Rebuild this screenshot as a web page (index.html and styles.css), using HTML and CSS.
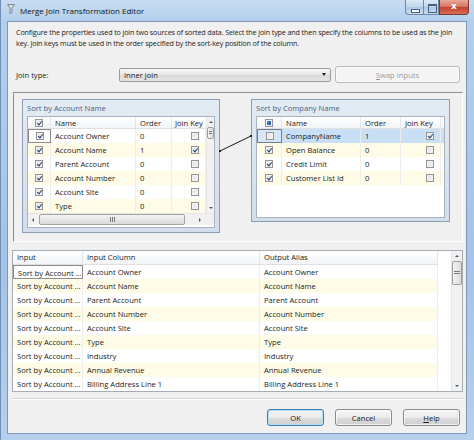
FILE: index.html
```html
<!DOCTYPE html>
<html>
<head>
    <title>Merge Join Transformation Editor</title>
    <meta name="viewport" content="width=device-width, initial-scale=1.0">
    <link rel="stylesheet" href="styles.css">
</head>
<body>
<div class="window">
    <div class="titlebar">
        <svg class="app-icon" width="8" height="10" viewBox="0 0 8 10">
            <path d="M0.5 0.5 H7.5 L5 4 V8.5 L3 9.5 V4 Z" fill="#d9dde2" stroke="#7d8791" stroke-width="1"/>
        </svg>
        <span class="title">Merge Join Transformation Editor</span>
        <div class="caption">
            <span class="cap cap-min"></span>
            <span class="cap cap-max"></span>
            <span class="cap cap-close">x</span>
        </div>
    </div>

    <div class="client">
        <p class="desc">Configure the properties used to join two sources of sorted data. Select the join type and then specify the columns to be used as the join<br>key. Join keys must be used in the order specified by the sort-key position of the column.</p>

        <div class="join-row">
            <label class="join-label"><u>J</u>oin type:</label>
            <div class="combo">
                <span>Inner join</span>
                <span class="combo-arrow"></span>
            </div>
            <button class="btn btn-disabled swap"><u>S</u>wap Inputs</button>
        </div>

        <!-- surface with the two sorted inputs -->
        <div class="designer">
            <div class="src src-left">
                <div class="src-title">Sort by Account Name</div>
                <div class="src-grid">
                    <div class="src-main">
                        <div class="src-table">
                            <div class="row head">
                                <div class="cell chk"><span class="cb on"></span></div>
                                <div class="cell">Name</div>
                                <div class="cell">Order</div>
                                <div class="cell">Join Key</div>
                            </div>
                            <div class="row">
                                <div class="cell chk focus"><span class="cb on"></span></div>
                                <div class="cell">Account Owner</div>
                                <div class="cell">0</div>
                                <div class="cell chk key"><span class="cb"></span></div>
                            </div>
                            <div class="row alt">
                                <div class="cell chk"><span class="cb on"></span></div>
                                <div class="cell">Account Name</div>
                                <div class="cell">1</div>
                                <div class="cell chk key"><span class="cb on"></span></div>
                            </div>
                            <div class="row">
                                <div class="cell chk"><span class="cb on"></span></div>
                                <div class="cell">Parent Account</div>
                                <div class="cell">0</div>
                                <div class="cell chk key"><span class="cb"></span></div>
                            </div>
                            <div class="row alt">
                                <div class="cell chk"><span class="cb on"></span></div>
                                <div class="cell">Account Number</div>
                                <div class="cell">0</div>
                                <div class="cell chk key"><span class="cb"></span></div>
                            </div>
                            <div class="row">
                                <div class="cell chk"><span class="cb on"></span></div>
                                <div class="cell">Account Site</div>
                                <div class="cell">0</div>
                                <div class="cell chk key"><span class="cb"></span></div>
                            </div>
                            <div class="row alt">
                                <div class="cell chk"><span class="cb on"></span></div>
                                <div class="cell">Type</div>
                                <div class="cell">0</div>
                                <div class="cell chk key"><span class="cb"></span></div>
                            </div>
                        </div>
                        <div class="vscroll">
                            <span class="arr up"></span>
                            <span class="thumb"></span>
                            <span class="track"></span>
                            <span class="arr down"></span>
                        </div>
                    </div>
                    <div class="hscroll">
                        <span class="arr left"></span>
                        <span class="hthumb"></span>
                        <span class="htrack"></span>
                        <span class="arr right"></span>
                        <span class="corner"></span>
                    </div>
                </div>
            </div>

            <div class="src src-right">
                <div class="src-title">Sort by Company Name</div>
                <div class="src-grid">
                    <div class="src-table">
                        <div class="row head">
                            <div class="cell chk"><span class="cb mixed"></span></div>
                            <div class="cell">Name</div>
                            <div class="cell">Order</div>
                            <div class="cell">Join Key</div>
                        </div>
                        <div class="row sel">
                            <div class="cell chk focus"><span class="cb"></span></div>
                            <div class="cell">CompanyName</div>
                            <div class="cell">1</div>
                            <div class="cell chk key"><span class="cb on"></span></div>
                        </div>
                        <div class="row alt">
                            <div class="cell chk"><span class="cb on"></span></div>
                            <div class="cell">Open Balance</div>
                            <div class="cell">0</div>
                            <div class="cell chk key"><span class="cb"></span></div>
                        </div>
                        <div class="row">
                            <div class="cell chk"><span class="cb on"></span></div>
                            <div class="cell">Credit Limit</div>
                            <div class="cell">0</div>
                            <div class="cell chk key"><span class="cb"></span></div>
                        </div>
                        <div class="row alt">
                            <div class="cell chk"><span class="cb on"></span></div>
                            <div class="cell">Customer List Id</div>
                            <div class="cell">0</div>
                            <div class="cell chk key"><span class="cb"></span></div>
                        </div>
                    </div>
                </div>
            </div>

            <svg class="connector" width="449" height="148" viewBox="0 0 449 148">
                <line x1="206" y1="58" x2="237" y2="43" stroke="#1a1a1a" stroke-width="1"/>
                <rect x="205" y="57" width="2" height="2" fill="#1a1a1a"/>
                <rect x="236" y="42" width="2" height="2" fill="#1a1a1a"/>
            </svg>
        </div>

        <!-- output columns -->
        <div class="output">
            <div class="out-table">
                <div class="orow head">
                    <div class="cell">Input</div>
                    <div class="cell">Input Column</div>
                    <div class="cell">Output Alias</div>
                </div>
                <div class="orow">
                    <div class="cell focus">Sort by Account ...</div>
                    <div class="cell">Account Owner</div>
                    <div class="cell">Account Owner</div>
                </div>
                <div class="orow alt">
                    <div class="cell">Sort by Account ...</div>
                    <div class="cell">Account Name</div>
                    <div class="cell">Account Name</div>
                </div>
                <div class="orow">
                    <div class="cell">Sort by Account ...</div>
                    <div class="cell">Parent Account</div>
                    <div class="cell">Parent Account</div>
                </div>
                <div class="orow alt">
                    <div class="cell">Sort by Account ...</div>
                    <div class="cell">Account Number</div>
                    <div class="cell">Account Number</div>
                </div>
                <div class="orow">
                    <div class="cell">Sort by Account ...</div>
                    <div class="cell">Account Site</div>
                    <div class="cell">Account Site</div>
                </div>
                <div class="orow alt">
                    <div class="cell">Sort by Account ...</div>
                    <div class="cell">Type</div>
                    <div class="cell">Type</div>
                </div>
                <div class="orow">
                    <div class="cell">Sort by Account ...</div>
                    <div class="cell">Industry</div>
                    <div class="cell">Industry</div>
                </div>
                <div class="orow alt">
                    <div class="cell">Sort by Account ...</div>
                    <div class="cell">Annual Revenue</div>
                    <div class="cell">Annual Revenue</div>
                </div>
                <div class="orow">
                    <div class="cell">Sort by Account ...</div>
                    <div class="cell">Billing Address Line 1</div>
                    <div class="cell">Billing Address Line 1</div>
                </div>
            </div>
            <div class="vscroll out-scroll">
                <span class="arr up"></span>
                <span class="thumb"></span>
                <span class="track"></span>
                <span class="arr down"></span>
            </div>
        </div>

        <div class="sep"></div>

        <div class="buttons">
            <button class="btn btn-default">OK</button>
            <button class="btn">Cancel</button>
            <button class="btn"><u>H</u>elp</button>
        </div>
    </div>
</div>
</body>
</html>
```

FILE: styles.css
```css
* {
    box-sizing: border-box;
}

html, body {
    margin: 0;
    padding: 0;
}

body {
    width: 474px;
    height: 440px;
    overflow: hidden;
    font-family: "Open Sans", "Noto Sans", sans-serif;
    font-size: 7.6px;
    color: #1b1b1b;
    background: #a8c6e8;
}

u {
    text-decoration: underline;
}

/* window frame */
.window {
    width: 474px;
    height: 440px;
    display: flex;
    flex-direction: column;
    padding: 0 7px 6px 6px;
    background: linear-gradient(to bottom, #c9ddf2 0, #b3cfec 21px, #a4c3e6 60%, #b6d0ec 100%);
    border-left: 1px solid #6f8fb4;
}

.titlebar {
    height: 21px;
    margin: 0 -7px 0 -6px;
    padding: 0 5px 0 6px;
    display: flex;
    align-items: flex-start;
}

.app-icon {
    margin-top: 4px;
}

.title {
    margin-left: 5px;
    margin-top: 5px;
    font-size: 8px;
    color: #111;
}

.caption {
    margin-left: auto;
    display: flex;
}

.cap {
    height: 15px;
    border: 1px solid #6f88a8;
    border-top: none;
    background: linear-gradient(to bottom, #dce9f6, #c2d6ec 50%, #adc7e5 51%, #c6dbf0);
}

.cap-min {
    width: 18px;
    border-radius: 0 0 0 4px;
    border-right: none;
    position: relative;
}

.cap-min::after {
    content: "";
    position: absolute;
    left: 5px;
    top: 9px;
    width: 7px;
    height: 2px;
    background: #fff;
    border: 1px solid #4a5f7c;
}

.cap-max {
    width: 16px;
    position: relative;
}

.cap-max::after {
    content: "";
    position: absolute;
    left: 4px;
    top: 4px;
    width: 7px;
    height: 6px;
    border: 1px solid #4a5f7c;
    border-top-width: 2px;
}

.cap-close {
    width: 30px;
    border-radius: 0 0 4px 0;
    border-color: #7c3a36;
    background: linear-gradient(to bottom, #e8a99c, #d4715e 50%, #c2412c 51%, #d86d55);
    color: #fff;
    font-family: "DejaVu Sans", sans-serif;
    font-weight: bold;
    font-size: 9px;
    text-align: center;
    line-height: 13px;
}

/* dialog client area */
.client {
    flex: 1;
    background: #f0f0f0;
    border: 1px solid #7e97b6;
    display: flex;
    flex-direction: column;
}

.desc {
    margin: 0;
    padding: 5px 8px 0 8px;
    font-size: 7.2px;
    letter-spacing: -0.14px;
    line-height: 10.5px;
    white-space: nowrap;
}

.join-row {
    margin-top: 18px;
    padding-left: 8px;
    display: flex;
    align-items: center;
}

.join-label {
    width: 103px;
}

.combo {
    width: 212px;
    height: 14px;
    border: 1px solid #9a9a9a;
    border-radius: 2px;
    background: linear-gradient(to bottom, #f7f7f7, #e6e6e6 50%, #dadada 51%, #e4e4e4);
    display: flex;
    align-items: center;
    padding: 0 4px;
}

.combo-arrow {
    margin-left: auto;
    width: 0;
    height: 0;
    border-left: 2.5px solid transparent;
    border-right: 2.5px solid transparent;
    border-top: 3px solid #222;
}

.btn {
    height: 17px;
    padding: 0;
    font-family: inherit;
    font-size: inherit;
    color: #1b1b1b;
    border: 1px solid #8a8a8a;
    border-radius: 3px;
    background: linear-gradient(to bottom, #f4f4f4, #ebebeb 50%, #dcdcdc 51%, #d0d0d0);
    box-shadow: inset 0 0 0 1px rgba(255, 255, 255, 0.7);
}

.swap {
    width: 125px;
    margin-left: 4px;
}

.btn-disabled {
    color: #9a9a9a;
    border-color: #b9b9b9;
    background: #f4f4f4;
}

/* designer surface */
.designer {
    position: relative;
    height: 150px;
    margin: 9px 3px 0 5px;
    border: 1px solid #8f8f8f;
    border-right-color: #fff;
    border-bottom-color: #fff;
    padding: 6px 0 0 8px;
    display: flex;
    align-items: flex-start;
    gap: 31px;
}

.connector {
    position: absolute;
    left: 0;
    top: 0;
    pointer-events: none;
}

.src {
    border: 1px solid #8d9db2;
    background: linear-gradient(to bottom, #e3ebf4, #d2deec);
    padding: 0 4px 4px 4px;
}

.src-left {
    width: 198px;
    height: 134px;
}

.src-right {
    width: 199px;
    height: 123px;
}

.src-title {
    height: 16px;
    line-height: 17px;
    color: #4b6180;
}

.src-grid {
    background: #fff;
    border: 1px solid #a9b3bf;
}

.src-left .src-grid {
    height: 112px;
}

.src-right .src-grid {
    height: 102px;
}

.src-main {
    display: flex;
}

.src-table {
    flex: 1;
}

.row {
    display: grid;
    height: 14px;
    line-height: 14px;
}

.src-left .row {
    grid-template-columns: 23px 85px 36px 34px;
}

.src-right .row {
    grid-template-columns: 25px 79px 40px 40px;
}

.row .cell,
.orow .cell {
    padding-left: 4px;
    border-right: 1px solid #ededed;
    white-space: nowrap;
    overflow: hidden;
}

.row.head {
    height: 12px;
    line-height: 12px;
    background: linear-gradient(to bottom, #ffffff, #f2f4f7);
    border-bottom: 1px solid #e0e0e0;
}

.row.head .cell {
    border-right-color: #e3e6ea;
}

.src-left .row.head .cell:last-child {
    padding-left: 3px;
    border-right: none;
}

.alt {
    background: #fefce6;
}

.row.sel {
    background: #c8dff6;
}

.cell.chk {
    padding-left: 0;
    display: flex;
    align-items: center;
    justify-content: center;
}

.cell.key {
    justify-content: flex-end;
    padding-right: 6px;
}

.cell.focus {
    background: #fff;
    border: 1px solid #8c8c8c;
}

.sel .cell.focus {
    background: #d6e7f8;
    border-color: #6f7f93;
}

/* checkboxes */
.cb {
    position: relative;
    width: 8px;
    height: 8px;
    border: 1px solid #949494;
    background: linear-gradient(135deg, #dedede, #f8f8f8);
    box-shadow: inset 0 0 0 1px #f2f2f2;
}

.cb.on::after {
    content: "";
    position: absolute;
    left: 2px;
    top: 0;
    width: 2px;
    height: 4px;
    border-right: 1px solid #233e6b;
    border-bottom: 1px solid #233e6b;
    transform: rotate(40deg);
}

.cb.mixed {
    background: #fff;
}

.cb.mixed::after {
    content: "";
    position: absolute;
    left: 1px;
    top: 1px;
    width: 4px;
    height: 4px;
    background: linear-gradient(135deg, #3f88c9, #1f5c99);
}

/* scrollbars */
.vscroll {
    width: 8px;
    display: flex;
    flex-direction: column;
    background: #f1f1f1;
    border-left: 1px solid #e6e6e6;
}

.arr {
    position: relative;
    height: 10px;
    flex: none;
}

.arr::after {
    content: "";
    position: absolute;
    width: 0;
    height: 0;
}

.arr.up::after {
    left: 2px;
    top: 4px;
    border-left: 2px solid transparent;
    border-right: 2px solid transparent;
    border-bottom: 2px solid #555;
}

.arr.down::after {
    left: 2px;
    top: 4px;
    border-left: 2px solid transparent;
    border-right: 2px solid transparent;
    border-top: 2px solid #555;
}

.arr.left::after {
    left: 4px;
    top: 4px;
    border-top: 2px solid transparent;
    border-bottom: 2px solid transparent;
    border-right: 2px solid #555;
}

.arr.right::after {
    left: 4px;
    top: 4px;
    border-top: 2px solid transparent;
    border-bottom: 2px solid transparent;
    border-left: 2px solid #555;
}

.thumb {
    height: 12px;
    border: 1px solid #9c9c9c;
    border-radius: 2px;
    background: linear-gradient(to right, #f3f3f3, #dcdcdc);
    position: relative;
    flex: none;
}

.thumb::after {
    content: "";
    position: absolute;
    left: 1px;
    right: 1px;
    top: 3px;
    height: 4px;
    background: repeating-linear-gradient(to bottom, #777 0, #777 1px, transparent 1px, transparent 2px);
}

.track {
    flex: 1;
}

.hscroll {
    height: 12px;
    display: flex;
    background: #f1f1f1;
    border-top: 1px solid #e6e6e6;
}

.hscroll .arr {
    width: 11px;
    height: 11px;
}

.hthumb {
    width: 146px;
    border: 1px solid #a3a3a3;
    border-radius: 2px;
    background: linear-gradient(to bottom, #f4f4f4, #dadada);
    position: relative;
}

.hthumb::after {
    content: "";
    position: absolute;
    left: 70px;
    top: 2px;
    width: 5px;
    height: 5px;
    background: repeating-linear-gradient(to right, #777 0, #777 1px, transparent 1px, transparent 2px);
}

.htrack {
    flex: 1;
}

.corner {
    width: 8px;
    background: #f0f0f0;
}

/* output grid */
.output {
    height: 142px;
    margin: 8px 3px 0 4px;
    border: 1px solid #a6acb3;
    background: #fff;
    display: flex;
}

.out-table {
    width: 425px;
}

.orow {
    display: grid;
    grid-template-columns: 70px 177px 178px;
    height: 14px;
    line-height: 14px;
}

.orow.head {
    height: 14px;
    line-height: 13px;
    background: linear-gradient(to bottom, #ffffff, #f2f4f7);
    border-bottom: 1px solid #e0e0e0;
}

.orow.head .cell {
    border-right-color: #e3e6ea;
}

.out-scroll {
    width: 11px;
    margin-left: auto;
}

.out-scroll .arr::after {
    left: 3px;
}

.out-scroll .thumb {
    height: 24px;
}

.out-scroll .thumb::after {
    top: 9px;
}

.sep {
    margin: 6px 3px 0 4px;
    height: 2px;
    border-top: 1px solid #d5d5d5;
    border-bottom: 1px solid #fff;
}

.buttons {
    margin-top: 9px;
    padding-right: 6px;
    display: flex;
    justify-content: flex-end;
    gap: 11px;
}

.buttons .btn {
    width: 57px;
}

.btn-default {
    border-color: #3c7fb1;
    box-shadow: inset 0 0 0 1px #b6e0f7;
}
```
